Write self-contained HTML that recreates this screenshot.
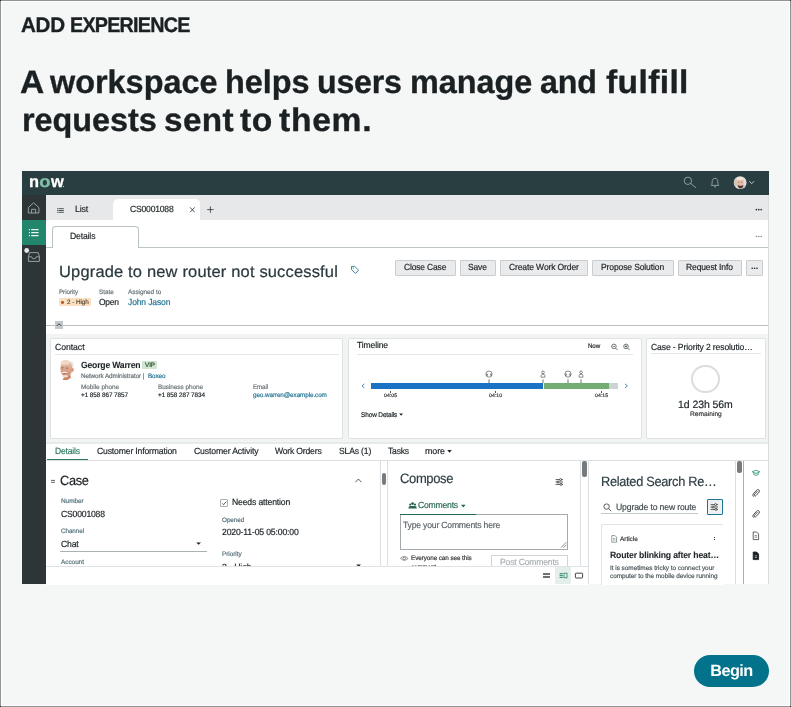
<!DOCTYPE html>
<html lang="en"><head><meta charset="utf-8"><title>Add Experience</title><style>
html,body{margin:0;padding:0}
body{width:791px;height:707px;position:relative;overflow:hidden;background:#f5f7f7;font-family:"Liberation Sans",sans-serif;}
#root{position:absolute;left:0;top:0;width:791px;height:707px;overflow:hidden;will-change:transform;text-rendering:geometricPrecision;background:#f5f7f7}
#root div,#root span.t,#root svg{position:absolute}
span.t{white-space:pre;display:block}
svg{overflow:visible}
</style></head><body><div id="root">
<div style="left:0.00px;top:0.00px;width:791.00px;height:707.00px;border:1px solid #939393;box-sizing:border-box;z-index:50;pointer-events:none;box-shadow:inset 0 0 0 1px #fff;"></div>
<div style="left:0.00px;top:0.00px;width:1.00px;height:1.00px;background:#2b2b2b;z-index:51;"></div>
<div style="left:790.00px;top:0.00px;width:1.00px;height:1.00px;background:#2b2b2b;z-index:51;"></div>
<div style="left:0.00px;top:706.00px;width:1.00px;height:1.00px;background:#2b2b2b;z-index:51;"></div>
<div style="left:790.00px;top:706.00px;width:1.00px;height:1.00px;background:#2b2b2b;z-index:51;"></div>
<span class="t" style="left:20.90px;top:15.00px;font-size:21px;line-height:21px;color:#1b2022;font-weight:bold;letter-spacing:-0.303px;transform:scaleX(0.9800);transform-origin:0 0;-webkit-text-stroke:0.35px #1b2022;">ADD </span>
<span class="t" style="left:70.40px;top:15.00px;font-size:21px;line-height:21px;color:#1b2022;font-weight:bold;letter-spacing:-0.813px;transform:scaleX(0.9399);transform-origin:0 0;-webkit-text-stroke:0.35px #1b2022;">EXPERIENCE </span>
<span class="t" style="left:20.30px;top:66.00px;font-size:32.5px;line-height:32.5px;color:#1b2022;font-weight:bold;letter-spacing:0.746px;transform:scaleX(1.0318);transform-origin:0 0;-webkit-text-stroke:0.35px #1b2022;">A </span>
<span class="t" style="left:50.30px;top:66.00px;font-size:32.5px;line-height:32.5px;color:#1b2022;font-weight:bold;letter-spacing:-0.029px;transform:scaleX(0.9985);transform-origin:0 0;-webkit-text-stroke:0.35px #1b2022;">workspace </span>
<span class="t" style="left:224.80px;top:66.00px;font-size:32.5px;line-height:32.5px;color:#1b2022;font-weight:bold;letter-spacing:-0.039px;transform:scaleX(0.9977);transform-origin:0 0;-webkit-text-stroke:0.35px #1b2022;">helps </span>
<span class="t" style="left:316.80px;top:66.00px;font-size:32.5px;line-height:32.5px;color:#1b2022;font-weight:bold;letter-spacing:-0.195px;transform:scaleX(0.9888);transform-origin:0 0;-webkit-text-stroke:0.35px #1b2022;">users </span>
<span class="t" style="left:410.30px;top:66.00px;font-size:32.5px;line-height:32.5px;color:#1b2022;font-weight:bold;letter-spacing:-0.061px;transform:scaleX(0.9970);transform-origin:0 0;-webkit-text-stroke:0.35px #1b2022;">manage </span>
<span class="t" style="left:540.20px;top:66.00px;font-size:32.5px;line-height:32.5px;color:#1b2022;font-weight:bold;letter-spacing:-0.198px;transform:scaleX(0.9897);transform-origin:0 0;-webkit-text-stroke:0.35px #1b2022;">and </span>
<span class="t" style="left:606.40px;top:66.00px;font-size:32.5px;line-height:32.5px;color:#1b2022;font-weight:bold;letter-spacing:0.364px;transform:scaleX(1.0328);transform-origin:0 0;-webkit-text-stroke:0.35px #1b2022;">fulfill </span>
<span class="t" style="left:22.00px;top:104.00px;font-size:32.5px;line-height:32.5px;color:#1b2022;font-weight:bold;letter-spacing:-0.055px;transform:scaleX(0.9967);transform-origin:0 0;-webkit-text-stroke:0.35px #1b2022;">requests </span>
<span class="t" style="left:164.20px;top:104.00px;font-size:32.5px;line-height:32.5px;color:#1b2022;font-weight:bold;letter-spacing:0.404px;transform:scaleX(1.0242);transform-origin:0 0;-webkit-text-stroke:0.35px #1b2022;">sent </span>
<span class="t" style="left:239.80px;top:104.00px;font-size:32.5px;line-height:32.5px;color:#1b2022;font-weight:bold;letter-spacing:0.543px;transform:scaleX(1.0354);transform-origin:0 0;-webkit-text-stroke:0.35px #1b2022;">to </span>
<span class="t" style="left:278.80px;top:104.00px;font-size:32.5px;line-height:32.5px;color:#1b2022;font-weight:bold;letter-spacing:0.639px;transform:scaleX(1.0369);transform-origin:0 0;-webkit-text-stroke:0.35px #1b2022;">them. </span>
<div style="left:694.00px;top:655.00px;width:75.00px;height:31.50px;background:#03738c;border-radius:16px;"></div>
<span class="t" style="left:710.20px;top:663.00px;font-size:16.3px;line-height:16.3px;color:#fff;font-weight:bold;letter-spacing:-0.527px;">Begin</span>
<div style="left:22.00px;top:171.30px;width:747.00px;height:413.20px;background:#fff;"></div>
<div style="left:22.00px;top:171.30px;width:747.00px;height:23.50px;background:#293e40;"></div>
<span class="t" style="left:28.90px;top:174.00px;font-size:16.4px;line-height:16.4px;color:#fff;font-weight:bold;letter-spacing:0.473px;-webkit-text-stroke:0.3px;">n<span style="color:#80c0a8;display:inline-block;transform:scaleX(1.12);margin:0 0.6px">o</span>w</span>
<div style="left:63.30px;top:185.90px;width:0.80px;height:0.80px;background:#cfd8d8;"></div>
<svg style="left:680.00px;top:174.00px;" width="80.00" height="18.00" viewBox="0 0 80.00 18.00">
<circle cx="7.9" cy="6.8" r="3.7" fill="none" stroke="#9fadaf" stroke-width="0.85"/>
<path d="M10.7 9.4 L15.9 13.8" stroke="#9fadaf" stroke-width="0.85" fill="none"/>
<path d="M31.2 11.4 C32.2 10.6 32.1 9.5 32.1 8.2 C32.1 5.6 33.2 4.3 35 4.3 C36.8 4.3 37.9 5.6 37.9 8.2 C37.9 9.5 37.8 10.6 38.8 11.4 Z" fill="none" stroke="#9fadaf" stroke-width="0.85" stroke-linejoin="round"/>
<path d="M34 12.6 Q35 13.6 36 12.6" stroke="#9fadaf" stroke-width="0.85" fill="none"/>
<path d="M69.3 7.1 L71.7 9.7 L74.1 7.1" stroke="#c5cfcf" stroke-width="0.9" fill="none"/>
</svg>
<svg style="left:728.00px;top:174.00px;" width="30.00" height="18.00" viewBox="0 0 791 475">
<defs><filter id="bl2" x="-20%" y="-20%" width="140%" height="140%"><feGaussianBlur stdDeviation="9"/></filter><clipPath id="cpa"><circle cx="320" cy="228" r="170"/></clipPath></defs>
<g clip-path="url(#cpa)"><rect x="140" y="50" width="360" height="360" fill="#e4ded8"/>
<g filter="url(#bl2)">
<ellipse cx="200" cy="230" rx="40" ry="90" fill="#cfc7b4"/>
<ellipse cx="325" cy="235" rx="92" ry="140" fill="#e9bca6"/>
<ellipse cx="320" cy="120" rx="85" ry="40" fill="#f3e6dd"/>
<ellipse cx="285" cy="215" rx="26" ry="10" fill="#7a5446" opacity="0.8"/>
<ellipse cx="365" cy="215" rx="26" ry="10" fill="#7a5446" opacity="0.8"/>
<path d="M250 300 Q330 330 410 290 Q405 380 330 385 Q265 380 250 300Z" fill="#4c3a33"/>
<ellipse cx="330" cy="300" rx="30" ry="12" fill="#d99a86"/>
<ellipse cx="440" cy="340" rx="40" ry="50" fill="#c9c4d6"/>
</g></g></svg>
<div style="left:22.00px;top:194.80px;width:24.00px;height:389.10px;background:#2d3537;"></div>
<div style="left:22.00px;top:219.80px;width:24.00px;height:25.20px;background:#21866b;"></div>
<svg style="left:26.00px;top:200.00px;" width="16.00" height="16.00" viewBox="0 0 16.00 16.00"><path d="M2.3 7.6 L7.6 2.8 L12.9 7.6 V13 H2.3 Z" fill="none" stroke="#a9b2b3" stroke-width="0.85" stroke-linejoin="round"/><path d="M5.6 13 V9.3 H9.6 V13" fill="none" stroke="#a9b2b3" stroke-width="0.85"/></svg>
<svg style="left:26.00px;top:226.00px;" width="16.00" height="14.00" viewBox="0 0 16.00 14.00"><g stroke="#eaf4f0" stroke-width="1.2"><path d="M5.2 3.6H12.6M5.2 6.6H12.6M5.2 9.6H12.6"/><path d="M2.9 3.6H4M2.9 6.6H4M2.9 9.6H4"/></g></svg>
<svg style="left:26.00px;top:248.00px;" width="16.00" height="16.00" viewBox="0 0 16.00 16.00"><path d="M2.4 8.6 L3.6 4.6 H12.2 L13.4 8.6 V13.4 H2.4 Z" fill="none" stroke="#a9b2b3" stroke-width="0.85" stroke-linejoin="round"/><path d="M2.4 8.8 H5.6 Q5.8 10.8 7.9 10.8 Q10 10.8 10.2 8.8 H13.4" fill="none" stroke="#a9b2b3" stroke-width="0.85"/><circle cx="0.7" cy="2.5" r="2.4" fill="#e4e9e9"/></svg>
<div style="left:46.00px;top:194.80px;width:723.00px;height:24.80px;background:#e6e8ea;"></div>
<div style="left:113.00px;top:199.00px;width:87.00px;height:20.60px;background:#fff;border-radius:5px 5px 0 0;"></div>
<svg style="left:56.00px;top:205.00px;" width="10.00" height="10.00" viewBox="0 0 10.00 10.00"><g stroke="#3a4447" stroke-width="0.9"><path d="M2.4 3.7H7.8M2.4 5.5H7.8M2.4 7.3H7.8"/><path d="M1 3.7H1.9M1 5.5H1.9M1 7.3H1.9"/></g></svg>
<span class="t" style="left:75.00px;top:205.00px;font-size:9px;line-height:9px;color:#20272a;-webkit-text-stroke:0.18px;letter-spacing:-0.103px;transform:scaleX(0.9705);transform-origin:0 0;">List</span>
<span class="t" style="left:130.00px;top:205.00px;font-size:9px;line-height:9px;color:#20272a;-webkit-text-stroke:0.18px;letter-spacing:-0.230px;transform:scaleX(0.9565);transform-origin:0 0;">CS0001088</span>
<svg style="left:188.00px;top:205.00px;" width="10.00" height="10.00" viewBox="0 0 10.00 10.00"><path d="M2.1 2.4 L6.7 7.2 M6.7 2.4 L2.1 7.2" stroke="#2a2f31" stroke-width="0.85"/></svg>
<svg style="left:205.00px;top:204.00px;" width="11.00" height="11.00" viewBox="0 0 11.00 11.00"><path d="M5.4 2.4 V8.8 M2.2 5.6 H8.6" stroke="#333" stroke-width="0.8"/></svg>
<svg style="left:754.00px;top:207.00px;" width="10.00" height="5.00" viewBox="0 0 10.00 5.00"><g fill="#2a2f31"><circle cx="2.4" cy="2.6" r="0.85"/><circle cx="4.8" cy="2.6" r="0.85"/><circle cx="7.2" cy="2.6" r="0.85"/></g></svg>
<div style="left:46.00px;top:246.50px;width:723.00px;height:1.20px;background:#bfc6c7;"></div>
<div style="left:52.40px;top:226.40px;width:86.60px;height:21.80px;background:#fff;border:1px solid #b9c1c2;box-sizing:border-box;border-radius:4px 4px 0 0;border-bottom:none;"></div>
<span class="t" style="left:69.60px;top:232.00px;font-size:9px;line-height:9px;color:#20272a;-webkit-text-stroke:0.18px;letter-spacing:-0.162px;transform:scaleX(0.9589);transform-origin:0 0;">Details</span>
<svg style="left:754.00px;top:234.00px;" width="10.00" height="5.00" viewBox="0 0 10.00 5.00"><g fill="#7d8486"><circle cx="2.4" cy="2.4" r="0.75"/><circle cx="4.8" cy="2.4" r="0.75"/><circle cx="7.2" cy="2.4" r="0.75"/></g></svg>
<span class="t" style="left:59.20px;top:264.00px;font-size:16.1px;line-height:16.1px;color:#2b393e;letter-spacing:0.170px;transform:scaleX(1.0230);transform-origin:0 0;-webkit-text-stroke:0.22px;">Upgrade to new router not successful</span>
<svg style="left:350.00px;top:265.00px;" width="11.00" height="11.00" viewBox="0 0 11.00 11.00"><path d="M1.5 1.4 H4.7 L8.6 5.2 L5.5 8.5 L1.5 4.6 Z" fill="none" stroke="#2a7b9c" stroke-width="0.9" stroke-linejoin="round"/><circle cx="3.2" cy="3.1" r="0.7" fill="#2a7b9c"/></svg>
<div style="left:395.00px;top:260.20px;width:60.70px;height:16.20px;background:#e9ebec;border:1px solid #c9cdcf;box-sizing:border-box;border-radius:1px;"></div>
<span class="t" style="left:403.90px;top:263.00px;font-size:8.8px;line-height:8.8px;color:#1d2224;-webkit-text-stroke:0.18px;letter-spacing:-0.167px;transform:scaleX(0.9632);transform-origin:0 0;">Close Case</span>
<div style="left:460.00px;top:260.20px;width:36.20px;height:16.20px;background:#e9ebec;border:1px solid #c9cdcf;box-sizing:border-box;border-radius:1px;"></div>
<span class="t" style="left:468.40px;top:263.00px;font-size:8.8px;line-height:8.8px;color:#1d2224;-webkit-text-stroke:0.18px;letter-spacing:-0.173px;transform:scaleX(0.9654);transform-origin:0 0;">Save</span>
<div style="left:500.20px;top:260.20px;width:88.00px;height:16.20px;background:#e9ebec;border:1px solid #c9cdcf;box-sizing:border-box;border-radius:1px;"></div>
<span class="t" style="left:509.30px;top:263.00px;font-size:8.8px;line-height:8.8px;color:#1d2224;-webkit-text-stroke:0.18px;letter-spacing:-0.130px;transform:scaleX(0.9702);transform-origin:0 0;">Create Work Order</span>
<div style="left:592.10px;top:260.20px;width:81.70px;height:16.20px;background:#e9ebec;border:1px solid #c9cdcf;box-sizing:border-box;border-radius:1px;"></div>
<span class="t" style="left:601.20px;top:263.00px;font-size:8.8px;line-height:8.8px;color:#1d2224;-webkit-text-stroke:0.18px;letter-spacing:-0.127px;transform:scaleX(0.9697);transform-origin:0 0;">Propose Solution</span>
<div style="left:677.60px;top:260.20px;width:64.40px;height:16.20px;background:#e9ebec;border:1px solid #c9cdcf;box-sizing:border-box;border-radius:1px;"></div>
<span class="t" style="left:686.40px;top:263.00px;font-size:8.8px;line-height:8.8px;color:#1d2224;-webkit-text-stroke:0.18px;letter-spacing:-0.131px;transform:scaleX(0.9685);transform-origin:0 0;">Request Info</span>
<div style="left:746.00px;top:260.20px;width:17.00px;height:16.20px;background:#e9ebec;border:1px solid #c9cdcf;box-sizing:border-box;border-radius:1px;"></div>
<svg style="left:750.00px;top:266.00px;" width="10.00" height="5.00" viewBox="0 0 10.00 5.00"><g fill="#1d2224"><circle cx="2.2" cy="2.3" r="0.8"/><circle cx="4.6" cy="2.3" r="0.8"/><circle cx="7" cy="2.3" r="0.8"/></g></svg>
<span class="t" style="left:59.00px;top:290.00px;font-size:6.4px;line-height:6.4px;color:#667276;-webkit-text-stroke:0.18px;letter-spacing:-0.056px;transform:scaleX(0.9774);transform-origin:0 0;">Priority</span>
<span class="t" style="left:99.20px;top:290.00px;font-size:6.4px;line-height:6.4px;color:#667276;-webkit-text-stroke:0.18px;letter-spacing:-0.024px;transform:scaleX(0.9920);transform-origin:0 0;">State</span>
<span class="t" style="left:127.70px;top:290.00px;font-size:6.4px;line-height:6.4px;color:#667276;-webkit-text-stroke:0.18px;letter-spacing:-0.009px;transform:scaleX(0.9969);transform-origin:0 0;">Assigned to</span>
<div style="left:59.00px;top:298.30px;width:32.00px;height:8.20px;background:#fbdfc1;border-radius:1px;"></div>
<div style="left:61.40px;top:301.00px;width:2.80px;height:2.80px;background:#a9551f;border-radius:50%;"></div>
<span class="t" style="left:66.80px;top:300.00px;font-size:6.5px;line-height:6.5px;color:#4a3827;letter-spacing:-0.067px;transform:scaleX(0.9763);transform-origin:0 0;-webkit-text-stroke:0.1px;">2 - High</span>
<span class="t" style="left:99.30px;top:298.00px;font-size:8.8px;line-height:8.8px;color:#20272a;-webkit-text-stroke:0.18px;letter-spacing:-0.221px;transform:scaleX(0.9590);transform-origin:0 0;">Open</span>
<span class="t" style="left:127.70px;top:298.00px;font-size:8.8px;line-height:8.8px;color:#1f7391;-webkit-text-stroke:0.18px;letter-spacing:-0.137px;transform:scaleX(0.9695);transform-origin:0 0;">John Jason</span>
<div style="left:46.00px;top:324.80px;width:723.00px;height:1.30px;background:#b9c0c2;"></div>
<div style="left:54.70px;top:320.90px;width:8.10px;height:7.80px;background:#c3c8ca;"></div>
<svg style="left:54.70px;top:320.90px;" width="8.10" height="7.80" viewBox="0 0 8.10 7.80"><path d="M1.8 5 L4.05 2.7 L6.3 5" stroke="#2a2f31" stroke-width="0.9" fill="none"/></svg>
<div style="left:46.00px;top:333.50px;width:723.00px;height:108.00px;background:#f2f4f4;"></div>
<div style="left:50.20px;top:338.30px;width:293.10px;height:100.30px;background:#fff;border:1px solid #dfe2e4;box-sizing:border-box;border-radius:2px;"></div>
<div style="left:348.30px;top:338.30px;width:293.50px;height:100.30px;background:#fff;border:1px solid #dfe2e4;box-sizing:border-box;border-radius:2px;"></div>
<div style="left:646.30px;top:338.30px;width:119.70px;height:100.30px;background:#fff;border:1px solid #dfe2e4;box-sizing:border-box;border-radius:2px;"></div>
<span class="t" style="left:55.20px;top:343.00px;font-size:8.8px;line-height:8.8px;color:#20272a;-webkit-text-stroke:0.18px;letter-spacing:-0.060px;transform:scaleX(0.9863);transform-origin:0 0;">Contact</span>
<div style="left:55.20px;top:354.10px;width:284.00px;height:0.80px;background:#e3e6e7;"></div>
<svg style="left:50.00px;top:355.00px;" width="40.00" height="30.00" viewBox="0 0 791 593">
<defs><filter id="bl" x="-20%" y="-20%" width="140%" height="140%"><feGaussianBlur stdDeviation="7"/></filter>
<linearGradient id="sk" x1="0" y1="0" x2="0" y2="1"><stop offset="0" stop-color="#efd3c2"/><stop offset="0.45" stop-color="#dca88f"/><stop offset="1" stop-color="#cf9275"/></linearGradient>
<clipPath id="cp2"><circle cx="315" cy="295" r="205"/></clipPath></defs>
<g clip-path="url(#cp2)"><g filter="url(#bl)">
<path d="M280 430 L400 395 L425 470 L330 500 L250 495Z" fill="#c8855f"/>
<path d="M340 500 L420 440 L470 420 L500 520 L330 520Z" fill="#f3f3f5"/>
<ellipse cx="430" cy="210" rx="34" ry="85" fill="#e9e4df"/>
<ellipse cx="448" cy="295" rx="20" ry="38" fill="#d98f6e"/>
<ellipse cx="322" cy="265" rx="118" ry="168" fill="url(#sk)"/>
<ellipse cx="300" cy="150" rx="85" ry="45" fill="#f0d8c9"/>
<ellipse cx="246" cy="252" rx="24" ry="10" fill="#6e4a3a" opacity="0.75"/>
<ellipse cx="335" cy="256" rx="24" ry="10" fill="#6e4a3a" opacity="0.75"/>
<ellipse cx="285" cy="344" rx="56" ry="13" fill="#f6f1ec"/>
<ellipse cx="292" cy="370" rx="36" ry="9" fill="#b0604f"/>
<ellipse cx="300" cy="420" rx="58" ry="24" fill="#ecdcd2"/>
</g></g></svg>
<span class="t" style="left:81.00px;top:361.00px;font-size:9px;line-height:9px;color:#1e2527;font-weight:bold;-webkit-text-stroke:0.08px;letter-spacing:-0.208px;transform:scaleX(0.9583);transform-origin:0 0;">George Warren</span>
<div style="left:142.40px;top:360.80px;width:14.40px;height:8.00px;background:#cfe6cf;border-radius:1px;"></div>
<span class="t" style="left:144.60px;top:363.00px;font-size:6.4px;line-height:6.4px;color:#2a4a30;-webkit-text-stroke:0.18px;letter-spacing:-0.052px;transform:scaleX(0.9847);transform-origin:0 0;">VIP</span>
<span class="t" style="left:81.00px;top:374.00px;font-size:6.5px;line-height:6.5px;color:#646e72;-webkit-text-stroke:0.18px;letter-spacing:-0.082px;transform:scaleX(0.9714);transform-origin:0 0;">Network Administrator | </span>
<span class="t" style="left:147.60px;top:374.00px;font-size:6.5px;line-height:6.5px;color:#1f7391;-webkit-text-stroke:0.18px;letter-spacing:-0.105px;transform:scaleX(0.9715);transform-origin:0 0;">Boxeo</span>
<span class="t" style="left:81.00px;top:385.00px;font-size:6.5px;line-height:6.5px;color:#6a7478;-webkit-text-stroke:0.18px;letter-spacing:-0.043px;transform:scaleX(0.9867);transform-origin:0 0;">Mobile phone</span>
<span class="t" style="left:81.00px;top:393.00px;font-size:6.5px;line-height:6.5px;color:#20272a;-webkit-text-stroke:0.18px;letter-spacing:-0.067px;transform:scaleX(0.9795);transform-origin:0 0;">+1 858 867 7857</span>
<span class="t" style="left:158.00px;top:385.00px;font-size:6.5px;line-height:6.5px;color:#6a7478;-webkit-text-stroke:0.18px;letter-spacing:-0.046px;transform:scaleX(0.9862);transform-origin:0 0;">Business phone</span>
<span class="t" style="left:158.00px;top:393.00px;font-size:6.5px;line-height:6.5px;color:#20272a;-webkit-text-stroke:0.18px;letter-spacing:-0.067px;transform:scaleX(0.9795);transform-origin:0 0;">+1 858 287 7834</span>
<span class="t" style="left:253.30px;top:385.00px;font-size:6.5px;line-height:6.5px;color:#6a7478;-webkit-text-stroke:0.18px;letter-spacing:-0.129px;transform:scaleX(0.9603);transform-origin:0 0;">Email</span>
<span class="t" style="left:253.30px;top:393.00px;font-size:6.5px;line-height:6.5px;color:#1f7391;-webkit-text-stroke:0.18px;letter-spacing:-0.092px;transform:scaleX(0.9741);transform-origin:0 0;">geo.warren@example.com</span>
<span class="t" style="left:357.20px;top:341.00px;font-size:8.8px;line-height:8.8px;color:#20272a;-webkit-text-stroke:0.18px;letter-spacing:-0.122px;transform:scaleX(0.9704);transform-origin:0 0;">Timeline</span>
<div style="left:357.20px;top:354.10px;width:275.40px;height:0.80px;background:#e3e6e7;"></div>
<span class="t" style="left:588.00px;top:344.00px;font-size:6.4px;line-height:6.4px;color:#1d2224;-webkit-text-stroke:0.18px;letter-spacing:-0.135px;transform:scaleX(0.9684);transform-origin:0 0;">Now</span>
<svg style="left:610.00px;top:342.00px;" width="22.00" height="10.00" viewBox="0 0 22.00 10.00"><g fill="none" stroke="#3a4245" stroke-width="0.7"><circle cx="3.9" cy="4.4" r="2.3"/><path d="M5.6 6.1 L7.6 8.1"/><path d="M2.7 4.4H5.1"/><circle cx="16" cy="4.4" r="2.3"/><path d="M17.7 6.1 L19.7 8.1"/><path d="M14.8 4.4H17.2M16 3.2V5.6"/></g></svg>
<svg style="left:360.00px;top:382.00px;" width="6.00" height="8.00" viewBox="0 0 6.00 8.00"><path d="M4.4 1.8 L2 3.9 L4.4 6" stroke="#2a7fb8" stroke-width="0.9" fill="none"/></svg>
<svg style="left:623.00px;top:382.00px;" width="7.00" height="8.00" viewBox="0 0 7.00 8.00"><path d="M2 1.8 L4.4 3.9 L2 6" stroke="#2a7fb8" stroke-width="0.9" fill="none"/></svg>
<div style="left:371.10px;top:383.20px;width:172.10px;height:6.00px;background:#1b72c4;"></div>
<div style="left:543.50px;top:383.20px;width:65.80px;height:6.00px;background:#74ad74;"></div>
<div style="left:609.30px;top:383.20px;width:8.60px;height:6.00px;background:#cdd3d5;"></div>
<div style="left:389.85px;top:390.70px;width:0.70px;height:2.00px;background:#555;"></div>
<span class="t" style="left:383.60px;top:394.00px;font-size:5px;line-height:5px;color:#333;-webkit-text-stroke:0.18px;letter-spacing:0.068px;transform:scaleX(1.0270);transform-origin:0 0;">04:05</span>
<div style="left:495.35px;top:390.70px;width:0.70px;height:2.00px;background:#555;"></div>
<span class="t" style="left:489.10px;top:394.00px;font-size:5px;line-height:5px;color:#333;-webkit-text-stroke:0.18px;letter-spacing:0.068px;transform:scaleX(1.0270);transform-origin:0 0;">04:10</span>
<div style="left:600.85px;top:390.70px;width:0.70px;height:2.00px;background:#555;"></div>
<span class="t" style="left:594.60px;top:394.00px;font-size:5px;line-height:5px;color:#333;-webkit-text-stroke:0.18px;letter-spacing:0.068px;transform:scaleX(1.0270);transform-origin:0 0;">04:15</span>
<svg style="left:484.90px;top:369.50px;" width="8.00" height="13.50" viewBox="0 0 8.00 13.50"><g fill="none" stroke="#4a5154" stroke-width="0.65"><circle cx="4" cy="4.1" r="3.1"/><rect x="1.5" y="3.6" width="1.1" height="2.2" rx="0.4" fill="#4a5154" stroke="none"/><rect x="5.4" y="3.6" width="1.1" height="2.2" rx="0.4" fill="#4a5154" stroke="none"/><path d="M4 9.4 V13" stroke="#333" stroke-width="0.7"/></g></svg>
<svg style="left:539.00px;top:369.50px;" width="8.00" height="13.50" viewBox="0 0 8.00 13.50"><g fill="none" stroke="#4a5154" stroke-width="0.65"><circle cx="4" cy="2.3" r="1.35"/><path d="M2.1 7.2 V5.6 Q2.1 4.2 4 4.2 Q5.9 4.2 5.9 5.6 V7.2 Z"/><path d="M4 9.4 V13" stroke="#333" stroke-width="0.7"/></g></svg>
<svg style="left:563.50px;top:369.50px;" width="8.00" height="13.50" viewBox="0 0 8.00 13.50"><g fill="none" stroke="#4a5154" stroke-width="0.65"><circle cx="4" cy="4.1" r="3.1"/><rect x="1.5" y="3.6" width="1.1" height="2.2" rx="0.4" fill="#4a5154" stroke="none"/><rect x="5.4" y="3.6" width="1.1" height="2.2" rx="0.4" fill="#4a5154" stroke="none"/><path d="M4 9.4 V13" stroke="#333" stroke-width="0.7"/></g></svg>
<svg style="left:576.70px;top:369.50px;" width="8.00" height="13.50" viewBox="0 0 8.00 13.50"><g fill="none" stroke="#4a5154" stroke-width="0.65"><circle cx="4" cy="2.3" r="1.35"/><path d="M2.1 7.2 V5.6 Q2.1 4.2 4 4.2 Q5.9 4.2 5.9 5.6 V7.2 Z"/><path d="M4 9.4 V13" stroke="#333" stroke-width="0.7"/></g></svg>
<span class="t" style="left:361.20px;top:413.00px;font-size:6.8px;line-height:6.8px;color:#20272a;-webkit-text-stroke:0.18px;letter-spacing:-0.148px;transform:scaleX(0.9552);transform-origin:0 0;">Show Details</span>
<svg style="left:398.00px;top:412.00px;" width="6.00" height="5.00" viewBox="0 0 6.00 5.00"><path d="M1.2 1.5 H5 L3.1 3.8Z" fill="#20272a"/></svg>
<span class="t" style="left:651.00px;top:343.00px;font-size:8.8px;line-height:8.8px;color:#20272a;-webkit-text-stroke:0.18px;letter-spacing:-0.106px;transform:scaleX(0.9724);transform-origin:0 0;">Case - Priority 2 resolutio…</span>
<div style="left:651.00px;top:353.30px;width:110.00px;height:0.80px;background:#e3e6e7;"></div>
<div style="left:691.30px;top:364.60px;width:28.60px;height:28.60px;border:2px solid #dcdcdc;box-sizing:border-box;border-radius:50%;"></div>
<span class="t" style="left:678.30px;top:400.00px;font-size:10.6px;line-height:10.6px;color:#20272a;-webkit-text-stroke:0.18px;letter-spacing:-0.059px;transform:scaleX(0.9895);transform-origin:0 0;">1d 23h 56m</span>
<span class="t" style="left:689.70px;top:412.00px;font-size:6.6px;line-height:6.6px;color:#333;-webkit-text-stroke:0.18px;letter-spacing:0.015px;transform:scaleX(1.0043);transform-origin:0 0;">Remaining</span>
<div style="left:46.00px;top:441.70px;width:723.00px;height:19.10px;background:#fff;border-top:2px solid #e7eaeb;border-bottom:1.4px solid #dde0e2;box-sizing:border-box;"></div>
<div style="left:46.80px;top:458.80px;width:41.70px;height:1.60px;background:#2c7a62;"></div>
<span class="t" style="left:55.20px;top:447.00px;font-size:9px;line-height:9px;color:#2c7a62;-webkit-text-stroke:0.18px;letter-spacing:-0.199px;transform:scaleX(0.9494);transform-origin:0 0;">Details</span>
<span class="t" style="left:97.10px;top:447.00px;font-size:9px;line-height:9px;color:#20272a;-webkit-text-stroke:0.18px;letter-spacing:-0.175px;transform:scaleX(0.9596);transform-origin:0 0;">Customer Information</span>
<span class="t" style="left:193.70px;top:447.00px;font-size:9px;line-height:9px;color:#20272a;-webkit-text-stroke:0.18px;letter-spacing:-0.151px;transform:scaleX(0.9631);transform-origin:0 0;">Customer Activity</span>
<span class="t" style="left:275.10px;top:447.00px;font-size:9px;line-height:9px;color:#20272a;-webkit-text-stroke:0.18px;letter-spacing:-0.202px;transform:scaleX(0.9563);transform-origin:0 0;">Work Orders</span>
<span class="t" style="left:338.60px;top:447.00px;font-size:9px;line-height:9px;color:#20272a;-webkit-text-stroke:0.18px;letter-spacing:-0.186px;transform:scaleX(0.9575);transform-origin:0 0;">SLAs (1)</span>
<span class="t" style="left:387.50px;top:447.00px;font-size:9px;line-height:9px;color:#20272a;-webkit-text-stroke:0.18px;letter-spacing:-0.217px;transform:scaleX(0.9529);transform-origin:0 0;">Tasks</span>
<span class="t" style="left:425.30px;top:447.00px;font-size:9px;line-height:9px;color:#20272a;-webkit-text-stroke:0.18px;letter-spacing:-0.065px;transform:scaleX(0.9874);transform-origin:0 0;">more</span>
<svg style="left:446.00px;top:448.00px;" width="7.00" height="6.00" viewBox="0 0 7.00 6.00"><path d="M1.2 1.9 H5.8 L3.5 4.7Z" fill="#20272a"/></svg>
<div style="left:379.60px;top:460.80px;width:0.80px;height:123.70px;background:#dcdfe1;"></div>
<div style="left:387.20px;top:460.80px;width:0.80px;height:123.70px;background:#dcdfe1;"></div>
<div style="left:579.90px;top:460.80px;width:0.80px;height:123.70px;background:#dcdfe1;"></div>
<div style="left:588.00px;top:460.80px;width:0.80px;height:123.70px;background:#dcdfe1;"></div>
<div style="left:735.20px;top:460.80px;width:0.80px;height:123.70px;background:#dcdfe1;"></div>
<div style="left:742.90px;top:460.80px;width:0.90px;height:123.70px;background:#a9b0b3;"></div>
<div style="left:768.20px;top:194.80px;width:0.80px;height:389.70px;background:#d9dcde;"></div>
<div style="left:381.60px;top:472.90px;width:4.20px;height:12.40px;background:#777b7d;border-radius:2px;"></div>
<div style="left:582.40px;top:460.90px;width:4.20px;height:15.80px;background:#777b7d;border-radius:2px;"></div>
<div style="left:737.40px;top:460.90px;width:4.20px;height:12.30px;background:#777b7d;border-radius:2px;"></div>
<svg style="left:50.00px;top:478.00px;" width="7.00" height="7.00" viewBox="0 0 7.00 7.00"><path d="M1 2.4H5M1 4.3H5" stroke="#4a5558" stroke-width="0.9"/></svg>
<span class="t" style="left:60.20px;top:474.00px;font-size:13.4px;line-height:13.4px;color:#1b2022;-webkit-text-stroke:0.18px;letter-spacing:-0.341px;transform:scaleX(0.9564);transform-origin:0 0;">Case</span>
<svg style="left:354.00px;top:476.00px;" width="9.00" height="9.00" viewBox="0 0 9.00 9.00"><path d="M1.4 6.2 L4.4 3 L7.4 6.2" stroke="#333" stroke-width="0.8" fill="none"/></svg>
<span class="t" style="left:61.20px;top:499.00px;font-size:6.5px;line-height:6.5px;color:#54707c;-webkit-text-stroke:0.18px;letter-spacing:-0.044px;transform:scaleX(0.9886);transform-origin:0 0;">Number</span>
<span class="t" style="left:61.20px;top:510.00px;font-size:9px;line-height:9px;color:#20272a;-webkit-text-stroke:0.18px;letter-spacing:-0.212px;transform:scaleX(0.9598);transform-origin:0 0;">CS0001088</span>
<span class="t" style="left:61.20px;top:529.00px;font-size:6.5px;line-height:6.5px;color:#54707c;-webkit-text-stroke:0.18px;letter-spacing:-0.088px;transform:scaleX(0.9745);transform-origin:0 0;">Channel</span>
<span class="t" style="left:61.20px;top:540.00px;font-size:9px;line-height:9px;color:#20272a;-webkit-text-stroke:0.18px;letter-spacing:-0.193px;transform:scaleX(0.9593);transform-origin:0 0;">Chat</span>
<svg style="left:195.00px;top:541.00px;" width="8.00" height="6.00" viewBox="0 0 8.00 6.00"><path d="M1.2 1.4 H6 L3.6 3.8Z" fill="#1b2022"/></svg>
<div style="left:59.50px;top:550.90px;width:147.40px;height:0.80px;background:#aab2b5;"></div>
<span class="t" style="left:61.20px;top:560.00px;font-size:6.5px;line-height:6.5px;color:#54707c;-webkit-text-stroke:0.18px;letter-spacing:-0.036px;transform:scaleX(0.9893);transform-origin:0 0;">Account</span>
<div style="left:219.50px;top:498.80px;width:8.30px;height:8.10px;background:#fff;border:0.8px solid #a9b0b3;box-sizing:border-box;border-radius:1px;"></div>
<svg style="left:219.50px;top:498.80px;" width="8.30" height="8.10" viewBox="0 0 8.30 8.10"><path d="M2.2 4.4 L3.6 5.8 L6.2 2.6" stroke="#333" stroke-width="0.8" fill="none"/></svg>
<span class="t" style="left:231.90px;top:498.00px;font-size:9px;line-height:9px;color:#20272a;-webkit-text-stroke:0.18px;letter-spacing:-0.168px;transform:scaleX(0.9600);transform-origin:0 0;">Needs attention</span>
<span class="t" style="left:221.50px;top:518.00px;font-size:6.5px;line-height:6.5px;color:#54707c;-webkit-text-stroke:0.18px;letter-spacing:-0.071px;transform:scaleX(0.9817);transform-origin:0 0;">Opened</span>
<span class="t" style="left:221.50px;top:528.00px;font-size:9px;line-height:9px;color:#20272a;-webkit-text-stroke:0.18px;letter-spacing:-0.169px;transform:scaleX(0.9612);transform-origin:0 0;">2020-11-05 05:00:00</span>
<span class="t" style="left:221.50px;top:552.00px;font-size:6.5px;line-height:6.5px;color:#54707c;-webkit-text-stroke:0.18px;letter-spacing:-0.040px;transform:scaleX(0.9842);transform-origin:0 0;">Priority</span>
<span class="t" style="left:221.50px;top:563.00px;font-size:9px;line-height:9px;color:#20272a;-webkit-text-stroke:0.18px;letter-spacing:-0.122px;transform:scaleX(0.9691);transform-origin:0 0;">2 - High</span>
<svg style="left:355.00px;top:563.00px;" width="8.00" height="6.00" viewBox="0 0 8.00 6.00"><path d="M1.2 1.4 H6 L3.6 3.8Z" fill="#1b2022"/></svg>
<span class="t" style="left:400.30px;top:472.00px;font-size:13.6px;line-height:13.6px;color:#2f3e43;-webkit-text-stroke:0.18px;letter-spacing:-0.372px;transform:scaleX(0.9553);transform-origin:0 0;">Compose</span>
<svg style="left:555.40px;top:477.60px;" width="9.00" height="8.00" viewBox="0 0 9.00 8.00"><g stroke="#333" stroke-width="0.8" fill="#fff"><path d="M0.6 1.6H8M0.6 4H8M0.6 6.4H8"/><circle cx="5.6" cy="1.6" r="1"/><circle cx="3" cy="4" r="1"/><circle cx="6" cy="6.4" r="1"/></g></svg>
<svg style="left:408.00px;top:501.00px;" width="10.00" height="8.00" viewBox="0 0 10.00 8.00"><g fill="#27694f"><circle cx="2.2" cy="3.6" r="1.1"/><circle cx="7" cy="3.6" r="1.1"/><circle cx="4.6" cy="2.6" r="1.4"/><path d="M0.4 7.4 Q0.4 5 2.4 5 H6.8 Q8.8 5 8.8 7.4Z"/></g></svg>
<span class="t" style="left:418.00px;top:501.00px;font-size:9px;line-height:9px;color:#27694f;-webkit-text-stroke:0.18px;letter-spacing:-0.231px;transform:scaleX(0.9576);transform-origin:0 0;">Comments</span>
<svg style="left:460.00px;top:503.00px;" width="7.00" height="6.00" viewBox="0 0 7.00 6.00"><path d="M1 1.7 H5.6 L3.3 4.5Z" fill="#27694f"/></svg>
<div style="left:400.30px;top:514.40px;width:167.50px;height:35.20px;background:#fff;border:1px solid #a3aaad;box-sizing:border-box;"></div>
<div style="left:400.30px;top:513.60px;width:75.70px;height:1.60px;background:#27694f;"></div>
<span class="t" style="left:403.40px;top:521.00px;font-size:9px;line-height:9px;color:#5c6568;-webkit-text-stroke:0.18px;letter-spacing:-0.201px;transform:scaleX(0.9564);transform-origin:0 0;">Type your Comments here</span>
<svg style="left:560.00px;top:541.00px;" width="7.00" height="7.40" viewBox="0 0 7.00 7.40"><path d="M1 6.6 L6.4 1.2 M3.6 6.6 L6.4 3.8" stroke="#555" stroke-width="0.7"/></svg>
<svg style="left:400.00px;top:555.00px;" width="9.00" height="7.00" viewBox="0 0 9.00 7.00"><g fill="none" stroke="#4a5558" stroke-width="0.6"><path d="M0.5 3.4 Q4.3 -0.4 8.1 3.4 Q4.3 7.2 0.5 3.4Z"/><circle cx="4.3" cy="3.4" r="1.3"/></g></svg>
<span class="t" style="left:410.60px;top:556.00px;font-size:6.5px;line-height:6.5px;color:#333;-webkit-text-stroke:0.18px;letter-spacing:-0.081px;transform:scaleX(0.9734);transform-origin:0 0;">Everyone can see this</span>
<span class="t" style="left:410.60px;top:565.00px;font-size:6.5px;line-height:6.5px;color:#333;-webkit-text-stroke:0.18px;letter-spacing:-0.126px;transform:scaleX(0.9670);transform-origin:0 0;">comment</span>
<div style="left:490.70px;top:554.60px;width:77.10px;height:17.40px;background:#fff;border:1px solid #cfd4d6;box-sizing:border-box;"></div>
<span class="t" style="left:499.90px;top:558.00px;font-size:9px;line-height:9px;color:#a9b0b3;-webkit-text-stroke:0.18px;letter-spacing:-0.210px;transform:scaleX(0.9575);transform-origin:0 0;">Post Comments</span>
<span class="t" style="left:601.20px;top:475.00px;font-size:13.4px;line-height:13.4px;color:#2f3e43;-webkit-text-stroke:0.18px;letter-spacing:-0.313px;transform:scaleX(0.9554);transform-origin:0 0;">Related Search Re…</span>
<svg style="left:602.50px;top:503.00px;" width="9.00" height="9.00" viewBox="0 0 9.00 9.00"><circle cx="3.6" cy="3.6" r="2.7" fill="none" stroke="#333" stroke-width="0.8"/><path d="M5.6 5.6 L8.2 8.2" stroke="#333" stroke-width="0.8"/></svg>
<span class="t" style="left:615.80px;top:503.00px;font-size:9px;line-height:9px;color:#414a4d;-webkit-text-stroke:0.18px;letter-spacing:-0.162px;transform:scaleX(0.9625);transform-origin:0 0;">Upgrade to new route</span>
<div style="left:601.20px;top:512.50px;width:96.90px;height:0.90px;background:#c3cacd;"></div>
<div style="left:706.90px;top:499.00px;width:15.90px;height:15.70px;background:#eef0f1;border:1.5px solid #1b7691;box-sizing:border-box;border-radius:1px;"></div>
<svg style="left:710.40px;top:503.00px;" width="9.00" height="8.00" viewBox="0 0 9.00 8.00"><g stroke="#333" stroke-width="0.8" fill="#fff"><path d="M0.6 1.6H8M0.6 4H8M0.6 6.4H8"/><circle cx="5.6" cy="1.6" r="1"/><circle cx="3" cy="4" r="1"/><circle cx="6" cy="6.4" r="1"/></g></svg>
<div style="left:601.20px;top:523.50px;width:122.30px;height:76.50px;background:#fff;border:1px solid #e1e4e6;box-sizing:border-box;border-radius:2px;border-right:none;"></div>
<svg style="left:610.60px;top:534.60px;" width="6.40" height="8.00" viewBox="0 0 6.40 8.00"><path d="M0.8 0.6 H4 L5.6 2.2 V7.2 H0.8Z" fill="none" stroke="#4a5558" stroke-width="0.6"/><path d="M2 3.6H4.4M2 5H4.4" stroke="#4a5558" stroke-width="0.5"/></svg>
<span class="t" style="left:619.80px;top:537.00px;font-size:6.5px;line-height:6.5px;color:#333;-webkit-text-stroke:0.18px;letter-spacing:-0.019px;transform:scaleX(0.9927);transform-origin:0 0;">Article</span>
<div style="left:714.20px;top:536.60px;width:0.80px;height:1.00px;background:#333;"></div>
<div style="left:714.20px;top:539.20px;width:0.80px;height:1.00px;background:#333;"></div>
<span class="t" style="left:609.70px;top:551.00px;font-size:9px;line-height:9px;color:#1e2527;font-weight:bold;-webkit-text-stroke:0.08px;letter-spacing:-0.172px;transform:scaleX(0.9606);transform-origin:0 0;">Router blinking after heat…</span>
<span class="t" style="left:609.70px;top:566.00px;font-size:6.5px;line-height:6.5px;color:#4a5558;-webkit-text-stroke:0.18px;letter-spacing:-0.030px;transform:scaleX(0.9893);transform-origin:0 0;">It is sometimes tricky to connect your</span>
<span class="t" style="left:609.70px;top:574.00px;font-size:6.5px;line-height:6.5px;color:#4a5558;-webkit-text-stroke:0.18px;letter-spacing:-0.037px;transform:scaleX(0.9877);transform-origin:0 0;">computer to the mobile device running</span>
<svg style="left:751.00px;top:468.00px;" width="10.00" height="10.00" viewBox="0 0 10.00 10.00"><g fill="none" stroke="#2a9a7a" stroke-width="0.85" stroke-linejoin="round"><path d="M1.2 3.8 L5 2.2 L8.8 3.8 L5 5.4Z"/><path d="M2.8 4.8 V6.6 Q5 8.2 7.2 6.6 V4.8"/></g></svg>
<svg style="left:751.00px;top:488.40px;" width="10.00" height="10.00" viewBox="0 0 10.00 10.00"><path d="M6.6 3.2 L3.6 6.4 Q2.8 7.4 3.6 8 Q4.4 8.6 5.2 7.6 L8 4.4 Q9 3 7.8 2 Q6.6 1.2 5.6 2.4 L2.4 5.8 Q1 7.6 2.6 8.8" fill="none" stroke="#4a4f52" stroke-width="1" transform="translate(0,-0.2)"/></svg>
<svg style="left:751.00px;top:508.80px;" width="10.00" height="10.00" viewBox="0 0 10.00 10.00"><path d="M6.6 3.2 L3.6 6.4 Q2.8 7.4 3.6 8 Q4.4 8.6 5.2 7.6 L8 4.4 Q9 3 7.8 2 Q6.6 1.2 5.6 2.4 L2.4 5.8 Q1 7.6 2.6 8.8" fill="none" stroke="#4a4f52" stroke-width="1" transform="translate(0,-0.2)"/></svg>
<svg style="left:752.40px;top:530.60px;" width="8.00" height="10.00" viewBox="0 0 8.00 10.00"><path d="M1.2 1 H4.6 L6.6 3 V8.6 H1.2Z" fill="none" stroke="#3a3f41" stroke-width="0.8"/><path d="M2.6 4.6H5.2M2.6 6.2H5.2" stroke="#3a3f41" stroke-width="0.6"/></svg>
<svg style="left:752.40px;top:551.00px;" width="8.00" height="10.00" viewBox="0 0 8.00 10.00"><path d="M1.2 1 H4.6 L6.6 3 V8.6 H1.2Z" fill="#1b2022" stroke="#1b2022" stroke-width="0.8"/><path d="M2.8 4.8H5M2.8 6.4H5" stroke="#fff" stroke-width="0.6"/></svg>
<div style="left:46.00px;top:566.00px;width:541.90px;height:18.50px;background:#fff;border-top:1.3px solid #e0e3e5;box-sizing:border-box;"></div>
<div style="left:555.10px;top:567.30px;width:15.90px;height:17.20px;background:#e4efeb;"></div>
<svg style="left:542.00px;top:571.00px;" width="9.00" height="9.00" viewBox="0 0 9.00 9.00"><path d="M1 3H8M1 6.1H8" stroke="#6c7174" stroke-width="2"/></svg>
<svg style="left:558.80px;top:571.00px;" width="9.20" height="9.00" viewBox="0 0 9.20 9.00"><path d="M0.6 2.6H3.8M0.6 4.5H3.8M0.6 6.4H3.8" stroke="#3f8f76" stroke-width="1.1"/><rect x="5" y="2.2" width="3" height="4.6" fill="none" stroke="#3f8f76" stroke-width="0.9"/></svg>
<svg style="left:575.00px;top:571.00px;" width="10.00" height="9.00" viewBox="0 0 10.00 9.00"><rect x="0.4" y="2.2" width="7.2" height="4.8" rx="0.8" fill="none" stroke="#2a2f31" stroke-width="0.9"/></svg>
<div style="left:22.00px;top:584.50px;width:747.00px;height:20.00px;background:#f5f7f7;"></div>
</div></body></html>
